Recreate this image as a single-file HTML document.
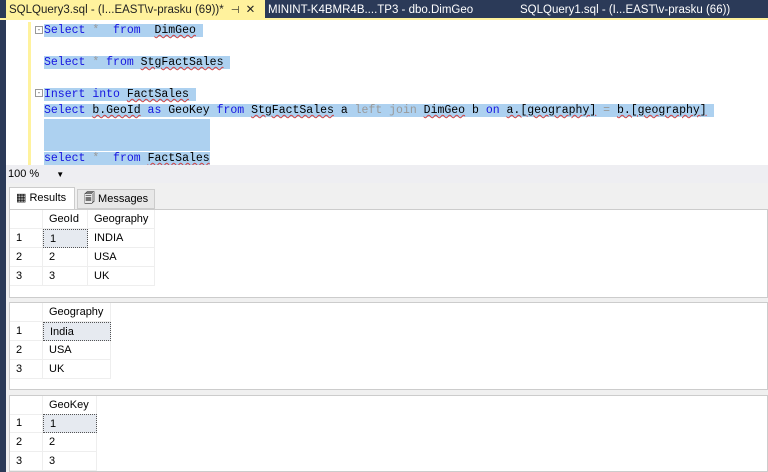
<!DOCTYPE html>
<html><head><style>
*{margin:0;padding:0;box-sizing:border-box}
body{width:768px;height:472px;overflow:hidden;background:#fff;font-family:"Liberation Sans",sans-serif;position:relative}
.abs{position:absolute}
.tabbar{left:0;top:0;width:768px;height:20px;background:#2b3a58;border-bottom:2px solid #fff29d}
.tab{top:0;height:20px;font-size:11.5px;line-height:20px;white-space:nowrap;overflow:hidden}
.code{font-family:"Liberation Mono",monospace;font-size:11.5px;line-height:16px;white-space:pre;color:#000}
.sel{background:#add1f0}
.kw{color:#1515e0}
.gr{color:#999}
.sq{text-decoration:underline wavy #d04040;text-decoration-thickness:1px}
.grid{font-size:11px;color:#000}
.cell{position:absolute;height:19px;line-height:19px;border-right:1px solid #eee;border-bottom:1px solid #eee;padding-left:6px}
</style></head><body>
<div class="abs" style="left:0;top:0;width:6px;height:472px;background:#2b3a58"></div>
<div class="abs tabbar"></div>
<div class="abs tab" style="left:6px;width:259px;background:#fff29d;color:#222;padding-left:3px">SQLQuery3.sql - (I...EAST\v-prasku (69))* <span style="margin-left:4px;font-size:10px">⊣</span><span style="margin-left:6px">✕</span></div>
<div class="abs tab" style="left:268px;color:#fff">MININT-K4BMR4B....TP3 - dbo.DimGeo</div>
<div class="abs tab" style="left:520px;color:#fff">SQLQuery1.sql - (I...EAST\v-prasku (66))</div>
<div class="abs" style="left:6px;top:22px;width:762px;height:143px;background:#fff"></div>
<div class="abs" style="left:28px;top:22px;width:3px;height:143px;background:#fff29d"></div>
<div class="abs" style="left:44px;top:119px;width:166px;height:32px;background:#add1f0"></div>
<div class="abs" style="left:35px;top:26px;width:8px;height:8px;border:1px solid #999;font-size:8px;line-height:6px;text-align:center;color:#666">-</div>
<div class="abs" style="left:35px;top:89px;width:8px;height:8px;border:1px solid #999;font-size:8px;line-height:6px;text-align:center;color:#666">-</div>
<div class="abs code" style="left:44px;top:23px"><span class="sel"><span class="kw">Select</span> <span class="gr">*</span>  <span class="kw">from</span>  <span class="sq">DimGeo</span> </span>
 
<span class="sel"><span class="kw">Select</span> <span class="gr">*</span> <span class="kw">from</span> <span class="sq">StgFactSales</span> </span>
 
<span class="sel"><span class="kw">Insert</span> <span class="kw">into</span> <span class="sq">FactSales</span> </span>
<span class="sel"><span class="kw">Select</span> <span class="sq">b.GeoId</span> <span class="kw">as</span> GeoKey <span class="kw">from</span> <span class="sq">StgFactSales</span> a <span class="gr">left join</span> <span class="sq">DimGeo</span> b <span class="kw">on</span> <span class="sq">a.[geography]</span> <span class="gr">=</span> <span class="sq">b.[geography]</span> </span>
 
 
<span class="sel"><span class="kw">select</span> <span class="gr">*</span>  <span class="kw">from</span> <span class="sq">FactSales</span></span></div>
<div class="abs" style="left:6px;top:165px;width:762px;height:18px;background:#eeeef2;font-size:11px;line-height:18px;padding-left:2px">100 % <span style="margin-left:14px;font-size:8px">▼</span></div>
<div class="abs" style="left:6px;top:183px;width:762px;height:289px;background:#f0f0f0"></div>
<div class="abs" style="left:9px;top:187px;width:66px;height:22px;background:#fff;border:1px solid #ccc;border-bottom:none;font-size:11px;line-height:20px;padding-left:6px">▦ Results</div>
<div class="abs" style="left:77px;top:189px;width:78px;height:20px;background:#e8e8e8;border:1px solid #ccc;font-size:11px;line-height:19px;padding-left:6px">🗐 Messages</div>
<div class="abs" style="left:9px;top:209px;width:759px;height:89px;background:#fff;border:1px solid #ccc"></div>
<div class="abs" style="left:9px;top:302px;width:759px;height:88px;background:#fff;border:1px solid #ccc"></div>
<div class="abs" style="left:9px;top:395px;width:759px;height:77px;background:#fff;border:1px solid #ccc"></div>
<div class="grid">
<div class="cell" style="left:10px;top:210px;width:33px"></div><div class="cell" style="left:43px;top:210px;width:45px">GeoId</div><div class="cell" style="left:88px;top:210px;width:67px">Geography</div>
<div class="cell" style="left:10px;top:229px;width:33px">1</div><div class="cell" style="left:43px;top:229px;width:45px;background:#e6eaf0;border:1px dotted #555">1</div><div class="cell" style="left:88px;top:229px;width:67px">INDIA</div>
<div class="cell" style="left:10px;top:248px;width:33px">2</div><div class="cell" style="left:43px;top:248px;width:45px">2</div><div class="cell" style="left:88px;top:248px;width:67px">USA</div>
<div class="cell" style="left:10px;top:267px;width:33px">3</div><div class="cell" style="left:43px;top:267px;width:45px">3</div><div class="cell" style="left:88px;top:267px;width:67px">UK</div>
<div class="cell" style="left:10px;top:303px;width:33px"></div><div class="cell" style="left:43px;top:303px;width:68px">Geography</div>
<div class="cell" style="left:10px;top:322px;width:33px">1</div><div class="cell" style="left:43px;top:322px;width:68px;background:#e6eaf0;border:1px dotted #555">India</div>
<div class="cell" style="left:10px;top:341px;width:33px">2</div><div class="cell" style="left:43px;top:341px;width:68px">USA</div>
<div class="cell" style="left:10px;top:360px;width:33px">3</div><div class="cell" style="left:43px;top:360px;width:68px">UK</div>
<div class="cell" style="left:10px;top:396px;width:33px"></div><div class="cell" style="left:43px;top:396px;width:54px">GeoKey</div>
<div class="cell" style="left:10px;top:414px;width:33px">1</div><div class="cell" style="left:43px;top:414px;width:54px;background:#e6eaf0;border:1px dotted #555">1</div>
<div class="cell" style="left:10px;top:433px;width:33px">2</div><div class="cell" style="left:43px;top:433px;width:54px">2</div>
<div class="cell" style="left:10px;top:452px;width:33px">3</div><div class="cell" style="left:43px;top:452px;width:54px">3</div>
</div>
</body></html>
